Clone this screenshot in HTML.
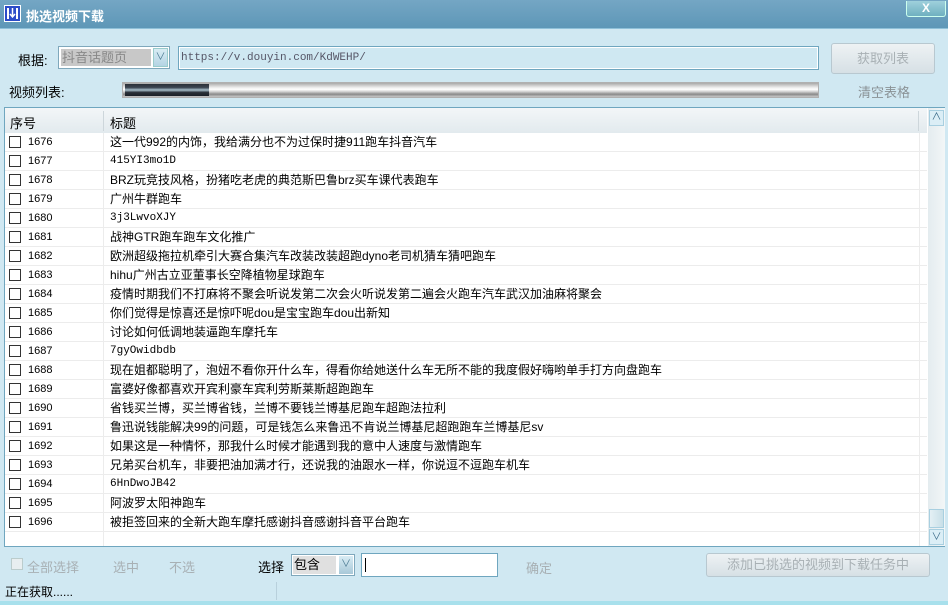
<!DOCTYPE html>
<html><head><meta charset="utf-8"><style>
*{margin:0;padding:0;box-sizing:border-box}
body{width:948px;height:605px;overflow:hidden;position:relative;background:#d0e8f2;font-family:"Liberation Sans","Noto Sans CJK SC","WenQuanYi Zen Hei",sans-serif;font-size:12px;color:#000}
.a{position:absolute}
.title{left:0;top:0;width:948px;height:29px;background:linear-gradient(#74a6c4,#5e97b7);border-bottom:1px solid #8fc0d8}
.title span{position:absolute;left:26px;top:6px;color:#fff;font-weight:bold;font-size:13px}
.icon{left:5px;top:5px;width:17px;height:17px;background:#2c4cc8;border:1px solid #fff}
.close{left:906px;top:1px;width:40px;height:16px;background:linear-gradient(#9fd0dc,#6fb0c0);border:1px solid #cfe;border-top:none;color:#fff;font-weight:bold;text-align:center;font-size:12px;line-height:15px;border-radius:0 0 3px 3px}
.mono{font-family:"Liberation Mono","Noto Sans CJK SC",monospace}
.table{left:4px;top:107px;width:941px;height:440px;background:#fff;border:1px solid #6fa6bf}
.hdr{left:0;top:0;width:922px;height:25px;background:linear-gradient(#f3f6f8,#e2eaee)}
.row{position:absolute;left:0;width:922px;height:19px;border-bottom:1px solid #ececec}
.cb{position:absolute;left:4px;top:3px;width:12px;height:12px;border:1px solid #333;background:#fff}
.num{position:absolute;left:23px;top:0;line-height:18px;font-size:11px}
.tt{position:absolute;left:105px;top:0;line-height:18px;height:18px;font-size:12px;white-space:nowrap}
.vl{position:absolute;left:98px;top:25px;width:1px;height:413px;background:#ececec}
.btn{background:linear-gradient(#eef2f4,#d6e0e5);border:1px solid #b8c8d0;border-radius:3px;color:#a8b0b4;text-align:center}
</style></head><body>
<div class="a title"><div class="a icon" style="left:4px;top:5px"><svg width="15" height="15"><rect x="2" y="2" width="2" height="11" fill="#fff"/><rect x="11" y="2" width="2" height="11" fill="#fff"/><path d="M7.5 2v9M5 8l2.5 3 2.5-3" stroke="#fff" stroke-width="1.5" fill="none"/></svg></div><span>挑选视频下载</span></div>
<div class="a close">X</div>

<div class="a" style="left:18px;top:50px;font-size:13px">根据:</div>
<div class="a" style="left:58px;top:46px;width:112px;height:23px;border:1px solid #7fa8bc;background:#fff"><div class="a" style="left:2px;top:2px;width:90px;height:17px;background:#c8c8c8;color:#888;font-size:13px;padding-left:1px;line-height:17px">抖音话题页</div><div class="a" style="right:1px;top:1px;width:15px;height:19px;background:linear-gradient(#d8ecf4,#b4d4e4);border:1px solid #9cc;color:#4a7890;font-size:10px;text-align:center;line-height:18px">∨</div></div>
<div class="a mono" style="left:178px;top:46px;width:641px;height:24px;border:1px solid #6fa6bf;background:#cfe8f2;box-shadow:inset 0 0 0 1px #fff;color:#556;font-size:11px;padding:5px 0 0 2px">https://v.douyin.com/KdWEHP/</div>
<div class="a btn" style="left:831px;top:43px;width:104px;height:31px;line-height:29px;font-size:13px">获取列表</div>

<div class="a" style="left:9px;top:82px;font-size:13px">视频列表:</div>
<div class="a" style="left:122px;top:82px;width:697px;height:16px;border:1px solid #b0b0b0;background:linear-gradient(#a8a8a8,#e8e8e8 30%,#fff 45%,#d8d8d8 60%,#8a8a8a 80%,#c8c8c8)"><div class="a" style="left:2px;top:1px;width:84px;height:12px;background:linear-gradient(#2a3038,#3c4652 30%,#a8c0cc 50%,#2a3038 70%,#1a2028)"></div></div>
<div class="a" style="left:858px;top:82px;color:#8a9296;font-size:13px">清空表格</div>

<div class="a table">
<div class="a hdr"><span class="a" style="left:5px;top:5px;font-size:13px">序号</span><div class="a" style="left:98px;top:3px;width:1px;height:20px;background:#cdd6db"></div><span class="a" style="left:105px;top:5px;font-size:13px">标题</span><div class="a" style="left:913px;top:3px;width:1px;height:20px;background:#cdd6db"></div></div>
<div class="vl"></div><div class="vl" style="left:914px"></div>
<div class="a" style="left:923px;top:0;width:17px;height:438px;background:linear-gradient(90deg,#e4ecef,#f2f6f7)">
<div class="a" style="left:1px;top:2px;width:15px;height:16px;border:1px solid #a8cfe0;background:#dbeef6;color:#3a6a88;font-size:10px;text-align:center;line-height:14px">∧</div>
<div class="a" style="left:1px;top:401px;width:15px;height:19px;border:1px solid #a8cfe0;background:linear-gradient(90deg,#e4f0f4,#c8dfe8)"></div>
<div class="a" style="left:1px;top:421px;width:15px;height:16px;border:1px solid #a8cfe0;background:#dbeef6;color:#3a6a88;font-size:10px;text-align:center;line-height:15px">∨</div>
</div>
<div class="row" style="top:25px"><div class="cb"></div><span class="num">1676</span><span class="tt">这一代992的内饰，我给满分也不为过保时捷911跑车抖音汽车</span></div>
<div class="row" style="top:44px"><div class="cb"></div><span class="num">1677</span><span class="tt mono" style="font-size:11px">415YI3mo1D</span></div>
<div class="row" style="top:63px"><div class="cb"></div><span class="num">1678</span><span class="tt">BRZ玩竞技风格，扮猪吃老虎的典范斯巴鲁brz买车课代表跑车</span></div>
<div class="row" style="top:82px"><div class="cb"></div><span class="num">1679</span><span class="tt">广州牛群跑车</span></div>
<div class="row" style="top:101px"><div class="cb"></div><span class="num">1680</span><span class="tt mono" style="font-size:11px">3j3LwvoXJY</span></div>
<div class="row" style="top:120px"><div class="cb"></div><span class="num">1681</span><span class="tt">战神GTR跑车跑车文化推广</span></div>
<div class="row" style="top:139px"><div class="cb"></div><span class="num">1682</span><span class="tt">欧洲超级拖拉机牵引大赛合集汽车改装改装超跑dyno老司机猜车猜吧跑车</span></div>
<div class="row" style="top:158px"><div class="cb"></div><span class="num">1683</span><span class="tt">hihu广州古立亚董事长空降植物星球跑车</span></div>
<div class="row" style="top:177px"><div class="cb"></div><span class="num">1684</span><span class="tt">疫情时期我们不打麻将不聚会听说发第二次会火听说发第二遍会火跑车汽车武汉加油麻将聚会</span></div>
<div class="row" style="top:196px"><div class="cb"></div><span class="num">1685</span><span class="tt">你们觉得是惊喜还是惊吓呢dou是宝宝跑车dou出新知</span></div>
<div class="row" style="top:215px"><div class="cb"></div><span class="num">1686</span><span class="tt">讨论如何低调地装逼跑车摩托车</span></div>
<div class="row" style="top:234px"><div class="cb"></div><span class="num">1687</span><span class="tt mono" style="font-size:11px">7gyOwidbdb</span></div>
<div class="row" style="top:253px"><div class="cb"></div><span class="num">1688</span><span class="tt">现在姐都聪明了，泡妞不看你开什么车，得看你给她送什么车无所不能的我度假好嗨哟单手打方向盘跑车</span></div>
<div class="row" style="top:272px"><div class="cb"></div><span class="num">1689</span><span class="tt">富婆好像都喜欢开宾利豪车宾利劳斯莱斯超跑跑车</span></div>
<div class="row" style="top:291px"><div class="cb"></div><span class="num">1690</span><span class="tt">省钱买兰博，买兰博省钱，兰博不要钱兰博基尼跑车超跑法拉利</span></div>
<div class="row" style="top:310px"><div class="cb"></div><span class="num">1691</span><span class="tt">鲁迅说钱能解决99的问题，可是钱怎么来鲁迅不肯说兰博基尼超跑跑车兰博基尼sv</span></div>
<div class="row" style="top:329px"><div class="cb"></div><span class="num">1692</span><span class="tt">如果这是一种情怀，那我什么时候才能遇到我的意中人速度与激情跑车</span></div>
<div class="row" style="top:348px"><div class="cb"></div><span class="num">1693</span><span class="tt">兄弟买台机车，非要把油加满才行，还说我的油跟水一样，你说逗不逗跑车机车</span></div>
<div class="row" style="top:367px"><div class="cb"></div><span class="num">1694</span><span class="tt mono" style="font-size:11px">6HnDwoJB42</span></div>
<div class="row" style="top:386px"><div class="cb"></div><span class="num">1695</span><span class="tt">阿波罗太阳神跑车</span></div>
<div class="row" style="top:405px"><div class="cb"></div><span class="num">1696</span><span class="tt">被拒签回来的全新大跑车摩托感谢抖音感谢抖音平台跑车</span></div>
</div>

<div class="a" style="left:11px;top:558px;width:12px;height:12px;border:1px solid #bcc;background:#e8eef0"></div>
<div class="a" style="left:27px;top:557px;color:#a8b0b4;font-size:13px">全部选择</div>
<div class="a" style="left:113px;top:557px;color:#a8b0b4;font-size:13px">选中</div>
<div class="a" style="left:169px;top:557px;color:#a8b0b4;font-size:13px">不选</div>
<div class="a" style="left:258px;top:557px;font-size:13px">选择</div>
<div class="a" style="left:291px;top:554px;width:64px;height:22px;border:1px solid #7fa8bc;background:#fff"><div class="a" style="left:1px;top:1px;width:43px;height:18px;background:#e0e0e0;font-size:13px;line-height:18px;padding-left:1px">包含</div><div class="a" style="right:1px;top:1px;width:14px;height:18px;background:linear-gradient(#d8ecf4,#a8c8d8);color:#4a7890;font-size:10px;text-align:center;line-height:17px">∨</div></div>
<div class="a" style="left:361px;top:553px;width:137px;height:24px;border:1px solid #6fa6bf;background:#fff"><div class="a" style="left:3px;top:4px;width:1px;height:14px;background:#000"></div></div>
<div class="a" style="left:526px;top:558px;color:#a8b0b4;font-size:13px">确定</div>
<div class="a btn" style="left:706px;top:553px;width:224px;height:24px;line-height:22px;font-size:13px">添加已挑选的视频到下载任务中</div>
<div class="a" style="left:5px;top:583px;font-size:12px">正在获取......</div>
<div class="a" style="left:276px;top:582px;width:1px;height:18px;background:#b8d0dc"></div>
<div class="a" style="left:0;top:601px;width:948px;height:4px;background:#a8e0ec"></div>
</body></html>
